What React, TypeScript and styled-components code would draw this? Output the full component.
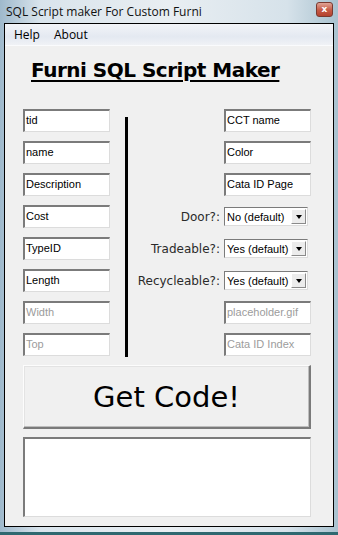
import * as React from 'react';
import styled, { createGlobalStyle } from 'styled-components';

const GlobalStyle = createGlobalStyle`
  html, body {
    margin: 0;
    padding: 0;
    background: #2f6870;
  }
`;

const Frame = styled.div`
  background: linear-gradient(90deg, #9fb9cc 0%, #d9e4ec 12%, #e9eef2 50%, #d6e2ea 85%, #a9c2cf 100%);
  display: flex;
  flex-direction: column;
  height: 532px;
  width: 338px;
`;

const TitleBar = styled.div`
  align-items: center;
  display: flex;
  height: 23px;
  justify-content: space-between;
  padding: 0 5px 0 6px;
  box-sizing: border-box;
`;

const TitleText = styled.span`
  color: #111;
  font-family: 'Open Sans', 'Noto Sans', sans-serif;
  font-size: 12px;
`;

const CloseButton = styled.div`
  align-items: center;
  background: linear-gradient(#e0a496, #c65a45 55%, #b4422e);
  border: 1px solid #7a3a30;
  border-radius: 3px;
  box-sizing: border-box;
  color: #fff;
  display: flex;
  font-family: 'DejaVu Sans', sans-serif;
  font-size: 9px;
  font-weight: bold;
  height: 15px;
  justify-content: center;
  margin-top: -5px;
  width: 17px;
`;

const Client = styled.div`
  background: #f0f0f0;
  border: 1px solid #000;
  display: flex;
  flex-direction: column;
  height: 504px;
  margin: 0 4px;
  box-sizing: border-box;
`;

const MenuBar = styled.div`
  background: linear-gradient(#f2f4f8, #e4e9f1 60%, #f0f2f6);
  border-bottom: 1px solid #fafbfd;
  display: flex;
  gap: 14px;
  height: 21px;
  align-items: center;
  padding: 0 0 0 9px;
`;

const MenuItem = styled.span`
  color: #000;
  font-family: 'Open Sans', 'Noto Sans', sans-serif;
  font-size: 12px;
`;

const Heading = styled.h1`
  color: #000;
  font-family: 'Comic Sans MS', 'DejaVu Sans', sans-serif;
  font-size: 20px;
  font-weight: bold;
  letter-spacing: -0.5px;
  margin: 11px 0 0 26px;
  text-decoration: underline;
  text-decoration-thickness: 2px;
  text-underline-offset: 3px;
  line-height: 26px;
`;

const Body = styled.div`
  display: flex;
  flex-direction: column;
  padding: 0 21px 0 18px;
`;

const FormArea = styled.div`
  display: flex;
  margin-top: 26px;
`;

const Column = styled.div`
  display: flex;
  flex-direction: column;
  gap: 9px;
`;

const RightColumn = styled(Column)`
  align-items: flex-end;
  flex: 1;
  margin-right: 1px;
  min-width: 0;
`;

const Divider = styled.div`
  background: #000;
  flex: 0 0 2.5px;
  height: 240px;
  margin: 8px 8px 0 15px;
`;

const TextBox = styled.div<{ $disabled?: boolean }>`
  background: #fff;
  border-style: solid;
  border-width: 2px 1px 1px 2px;
  border-color: #7b7b7b #dcdcdc #dcdcdc #7b7b7b;
  box-sizing: border-box;
  color: ${p => (p.$disabled ? '#9c9c9c' : '#000')};
  font-family: 'Liberation Sans', Arial, sans-serif;
  font-size: 11px;
  height: 23px;
  line-height: 17px;
  padding: 1px 0 0 1px;
  width: 87px;
`;

const Row = styled.div`
  align-items: center;
  display: flex;
  gap: 4px;
  height: 23px;
  justify-content: flex-end;
`;

const FieldLabel = styled.span`
  color: #2a2a2a;
  font-family: 'Comic Sans MS', 'DejaVu Sans', sans-serif;
  font-size: 12px;
  white-space: nowrap;
`;

const Combo = styled.div`
  align-items: center;
  background: #fff;
  border-style: solid;
  border-width: 1px;
  border-color: #7b7b7b #dcdcdc #dcdcdc #7b7b7b;
  box-sizing: border-box;
  display: flex;
  height: 19px;
  justify-content: space-between;
  margin-right: 3px;
  padding: 0 1px 0 2px;
  width: 84px;
`;

const ComboText = styled.span`
  color: #000;
  font-family: 'Liberation Sans', Arial, sans-serif;
  font-size: 11px;
`;

const ComboArrow = styled.div`
  align-items: center;
  background: #ececec;
  border-style: solid;
  border-width: 1px;
  border-color: #fff #8a8a8a #8a8a8a #fff;
  box-sizing: border-box;
  display: flex;
  height: 15px;
  justify-content: center;
  width: 15px;

  &::after {
    border-left: 3.5px solid transparent;
    border-right: 3.5px solid transparent;
    border-top: 4px solid #000;
    content: '';
  }
`;

const GetCodeButton = styled.button`
  background: #f0f0f0;
  border-style: solid;
  border-width: 1px 2px 2px 1px;
  border-color: #fcfcfc #7a7a7a #7a7a7a #fcfcfc;
  box-shadow: inset -1px -1px 0 #bdbdbd, inset 1px 1px 0 #e3e3e3;
  color: #000;
  font-family: 'Comic Sans MS', 'DejaVu Sans', sans-serif;
  font-size: 29px;
  height: 64px;
  margin-top: 8px;
  padding: 0;
  width: 288px;
`;

const Output = styled.div`
  background: #fff;
  border-style: solid;
  border-width: 2px 1px 1px 2px;
  border-color: #7b7b7b #dcdcdc #dcdcdc #7b7b7b;
  box-sizing: border-box;
  height: 80px;
  margin-top: 8px;
  width: 288px;
`;

const leftFields: { text: string; disabled?: boolean }[] = [
  { text: 'tid' },
  { text: 'name' },
  { text: 'Description' },
  { text: 'Cost' },
  { text: 'TypeID' },
  { text: 'Length' },
  { text: 'Width', disabled: true },
  { text: 'Top', disabled: true },
];

const combos = [
  { label: 'Door?:', value: 'No (default)' },
  { label: 'Tradeable?:', value: 'Yes (default)' },
  { label: 'Recycleable?:', value: 'Yes (default)' },
];

const App = () => {
  return (
    <>
      <GlobalStyle />
      <Frame>
        <TitleBar>
          <TitleText>SQL Script maker For Custom Furni</TitleText>
          <CloseButton>x</CloseButton>
        </TitleBar>
        <Client>
          <MenuBar>
            <MenuItem>Help</MenuItem>
            <MenuItem>About</MenuItem>
          </MenuBar>
          <Heading>Furni SQL Script Maker</Heading>
          <Body>
            <FormArea>
              <Column>
                {leftFields.map(f => (
                  <TextBox key={f.text} $disabled={f.disabled}>
                    {f.text}
                  </TextBox>
                ))}
              </Column>
              <Divider />
              <RightColumn>
                <TextBox>CCT name</TextBox>
                <TextBox>Color</TextBox>
                <TextBox>Cata ID Page</TextBox>
                {combos.map(c => (
                  <Row key={c.label}>
                    <FieldLabel>{c.label}</FieldLabel>
                    <Combo>
                      <ComboText>{c.value}</ComboText>
                      <ComboArrow />
                    </Combo>
                  </Row>
                ))}
                <TextBox $disabled>placeholder.gif</TextBox>
                <TextBox $disabled>Cata ID Index</TextBox>
              </RightColumn>
            </FormArea>
            <GetCodeButton>Get Code!</GetCodeButton>
            <Output />
          </Body>
        </Client>
      </Frame>
    </>
  );
};

export default App;
